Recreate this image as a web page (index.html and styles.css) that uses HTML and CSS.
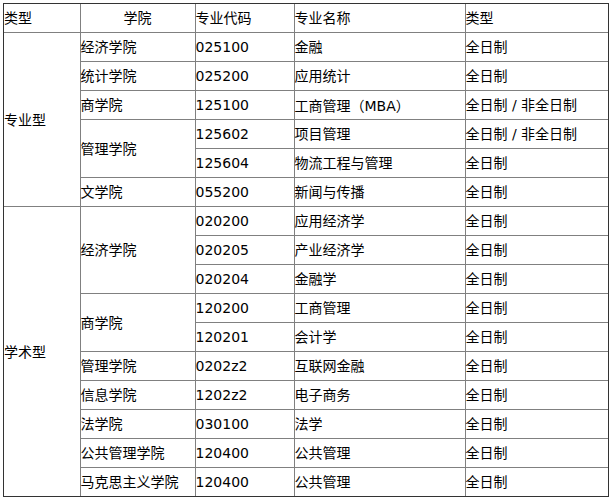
FILE: index.html
```html
<!DOCTYPE html>
<html lang="zh">
<head>
<meta charset="utf-8">
<title>专业目录</title>
<link rel="stylesheet" href="styles.css">
</head>
<body>
<div class="frame">
<table class="grid">
<colgroup>
<col class="c1"><col class="c2"><col class="c3"><col class="c4"><col class="c5">
</colgroup>
<tr><td>类型</td><td class="center">学院</td><td>专业代码</td><td>专业名称</td><td>类型</td></tr>
<tr><td rowspan="6">专业型</td><td>经济学院</td><td>025100</td><td>金融</td><td>全日制</td></tr>
<tr><td>统计学院</td><td>025200</td><td>应用统计</td><td>全日制</td></tr>
<tr><td>商学院</td><td>125100</td><td>工商管理<span class="fw">（</span>MBA<span class="fw">）</span></td><td>全日制 / 非全日制</td></tr>
<tr><td rowspan="2">管理学院</td><td>125602</td><td>项目管理</td><td>全日制 / 非全日制</td></tr>
<tr><td>125604</td><td>物流工程与管理</td><td>全日制</td></tr>
<tr><td>文学院</td><td>055200</td><td>新闻与传播</td><td>全日制</td></tr>
<tr><td rowspan="10">学术型</td><td rowspan="3">经济学院</td><td>020200</td><td>应用经济学</td><td>全日制</td></tr>
<tr><td>020205</td><td>产业经济学</td><td>全日制</td></tr>
<tr><td>020204</td><td>金融学</td><td>全日制</td></tr>
<tr><td rowspan="2">商学院</td><td>120200</td><td>工商管理</td><td>全日制</td></tr>
<tr><td>120201</td><td>会计学</td><td>全日制</td></tr>
<tr><td>管理学院</td><td>0202z2</td><td>互联网金融</td><td>全日制</td></tr>
<tr><td>信息学院</td><td>1202z2</td><td>电子商务</td><td>全日制</td></tr>
<tr><td>法学院</td><td>030100</td><td>法学</td><td>全日制</td></tr>
<tr><td>公共管理学院</td><td>120400</td><td>公共管理</td><td>全日制</td></tr>
<tr><td>马克思主义学院</td><td>120400</td><td>公共管理</td><td>全日制</td></tr>
</table>
</div>
</body>
</html>
```
FILE: styles.css
```css
html, body {
  margin: 0;
  padding: 0;
  background: #fff;
}
body {
  padding: 3px;
}
.frame {
  width: 604px;
  border: 1px solid #333;
}
.grid {
  width: 604px;
  border-collapse: collapse;
  border-style: hidden;
  table-layout: fixed;
  font-family: "DejaVu Sans", "Noto Sans CJK SC", sans-serif;
  font-size: 14px;
  color: #000;
  text-spacing-trim: space-all;
}
.c1 { width: 76px; }
.c2 { width: 115px; }
.c3 { width: 99px; }
.c4 { width: 171px; }
.c5 { width: 143px; }
.grid td {
  border: 1px solid #808080;
  padding: 0;
  height: 28px;
  line-height: 18px;
  vertical-align: middle;
  text-align: left;
  white-space: nowrap;
}
.grid td.center {
  text-align: center;
}
.fw {
  display: inline-block;
  width: 14px;
  text-align: center;
  font-family: "Noto Sans CJK SC", sans-serif;
}
```
